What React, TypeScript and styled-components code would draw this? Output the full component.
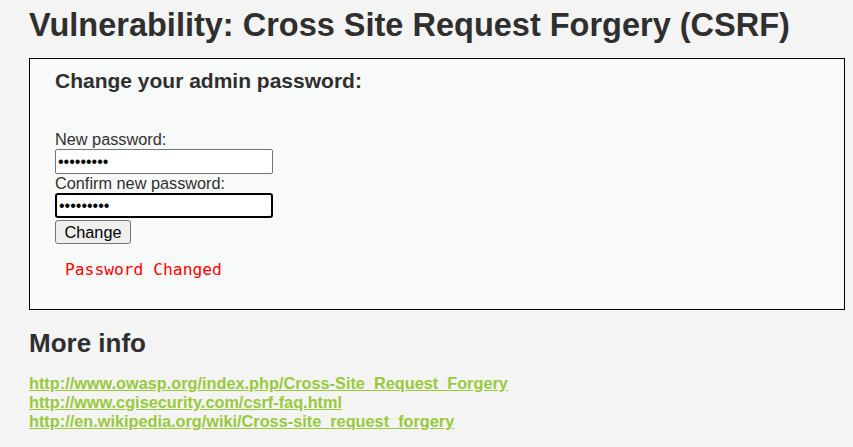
import React from "react";
import styled, { createGlobalStyle } from "styled-components";

const Global = createGlobalStyle`
  html, body { margin: 0; padding: 0; background: #f4f4f4; }
  body { font-family: "Liberation Sans", Arial, sans-serif; color: #2f2f2f; font-size: 16.3px; }
`;

const Page = styled.div`
  padding: 7px 8px 0 29px;
  width: 816px;
`;

const Title = styled.h1`
  margin: 0 0 14px 0;
  font-size: 32.5px;
  line-height: 37px;
  font-weight: bold;
  color: #2f2f2f;
`;

const Box = styled.div`
  border: 1px solid #000;
  background: #f8f9f9;
  height: 252px;
  padding: 10px 25px 0 25px;
  box-sizing: border-box;
  display: flex;
  flex-direction: column;
  align-items: flex-start;
`;

const BoxHeading = styled.h3`
  margin: 0 0 37px 0;
  font-size: 21px;
  line-height: 24px;
  font-weight: bold;
`;

const Label = styled.label`
  display: block;
  font-size: 16.3px;
  line-height: 18px;
  margin-bottom: 1px;
`;

const Input = styled.input<{ $focused?: boolean }>`
  box-sizing: border-box;
  width: 218px;
  height: 25px;
  margin: 0;
  padding: 1px 2px;
  font-family: "Liberation Sans", Arial, sans-serif;
  font-size: 16px;
  background: #fff;
  border: ${(p) => (p.$focused ? "2px solid #000" : "1px solid #767676")};
  border-radius: ${(p) => (p.$focused ? "3px" : "2px")};
  outline: none;
`;

const Button = styled.button`
  box-sizing: border-box;
  margin-top: 2px;
  height: 24px;
  width: 76px;
  padding: 0;
  font-family: "Liberation Sans", Arial, sans-serif;
  font-size: 16.3px;
  color: #000;
  background: #efefef;
  border: 1px solid #767676;
  border-radius: 3px;
`;

const Message = styled.pre`
  margin: 16px 0 0 10px;
  font-family: "DejaVu Sans Mono", monospace;
  font-size: 16.3px;
  line-height: 19px;
  color: #ff0000;
`;

const SubTitle = styled.h2`
  margin: 18px 0 16px 0;
  font-size: 26px;
  line-height: 30px;
  font-weight: bold;
`;

const Links = styled.ul`
  list-style: none;
  margin: 0;
  padding: 0;
`;

const LinkItem = styled.li`
  line-height: 19px;
  height: 19px;
`;

const Link = styled.a`
  color: #98c93c;
  font-weight: bold;
  font-size: 16.3px;
  text-decoration: underline;
`;

const links = [
  "http://www.owasp.org/index.php/Cross-Site_Request_Forgery",
  "http://www.cgisecurity.com/csrf-faq.html",
  "http://en.wikipedia.org/wiki/Cross-site_request_forgery",
];

export default function App() {
  return (
    <>
      <Global />
      <Page>
        <Title>Vulnerability: Cross Site Request Forgery (CSRF)</Title>
        <Box>
          <BoxHeading>Change your admin password:</BoxHeading>
          <Label>New password:</Label>
          <Input type="password" defaultValue="password1" readOnly />
          <Label>Confirm new password:</Label>
          <Input type="password" defaultValue="password1" readOnly $focused />
          <Button>Change</Button>
          <Message>Password Changed</Message>
        </Box>
        <SubTitle>More info</SubTitle>
        <Links>
          {links.map((l) => (
            <LinkItem key={l}>
              <Link href="#">{l}</Link>
            </LinkItem>
          ))}
        </Links>
      </Page>
    </>
  );
}
